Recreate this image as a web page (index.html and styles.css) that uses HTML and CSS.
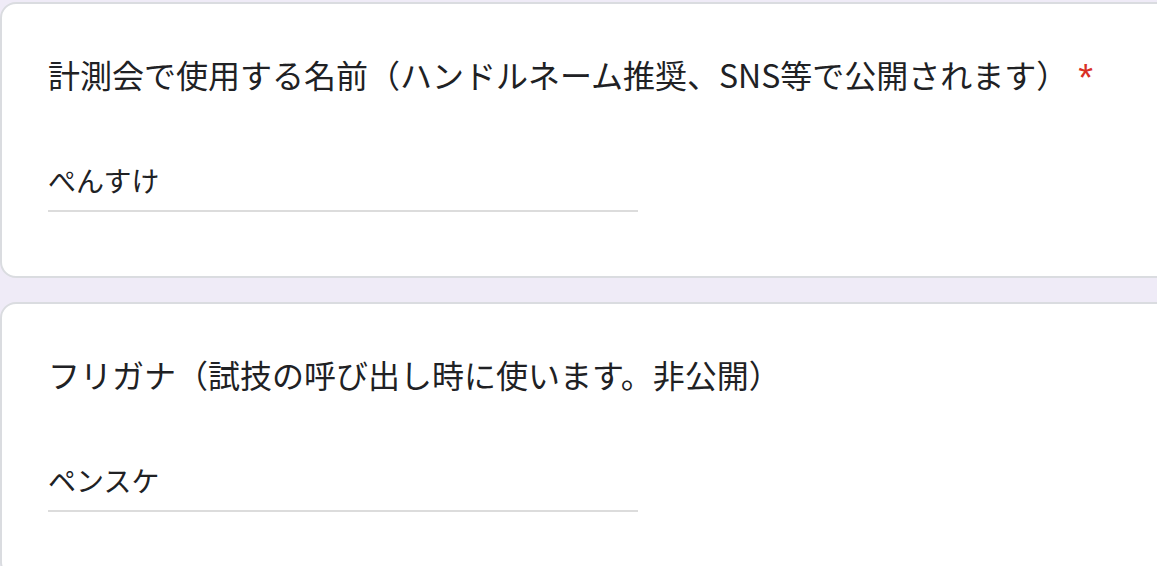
FILE: index.html
```html
<!DOCTYPE html>
<html lang="ja">
<head>
<meta charset="utf-8">
<link rel="stylesheet" href="styles.css">
</head>
<body>
<div class="page">
  <div class="card">
    <div class="title">計測会で使用する名前（ハンドルネーム推奨、SNS等で公開されます）<span class="req">*</span></div>
    <div class="answer">ぺんすけ</div>
  </div>
  <div class="card">
    <div class="title">フリガナ（試技の呼び出し時に使います。非公開）</div>
    <div class="answer">ペンスケ</div>
  </div>
</div>
</body>
</html>
```
FILE: styles.css
```css
html, body {
  margin: 0;
  padding: 0;
}
body {
  background: #efebf7;
  overflow: hidden;
  height: 566px;
  font-family: "Noto Sans CJK JP", "Noto Sans", sans-serif;
  color: #202124;
}
.page {
  padding-top: 2px;
  display: flex;
  flex-direction: column;
  gap: 24px;
  overflow: hidden;
}
.card {
  width: 1240px;
  box-sizing: border-box;
  background: #fff;
  border: 2px solid #dadce0;
  border-radius: 16px;
  padding: 48px 46px 64px 46px;
}
.title {
  font-size: 32px;
  line-height: 44px;
  height: 44px;
  white-space: nowrap;
}
.req {
  color: #d93025;
  font-family: "Liberation Sans", Arial, sans-serif;
  font-size: 38px;
  line-height: 0;
  margin-left: 10px;
  vertical-align: -3px;
}
.answer {
  margin-top: 64px;
  width: 590px;
  font-size: 28px;
  line-height: 40px;
  padding-bottom: 10px;
  border-bottom: 2px solid #dcdcdc;
}
```
